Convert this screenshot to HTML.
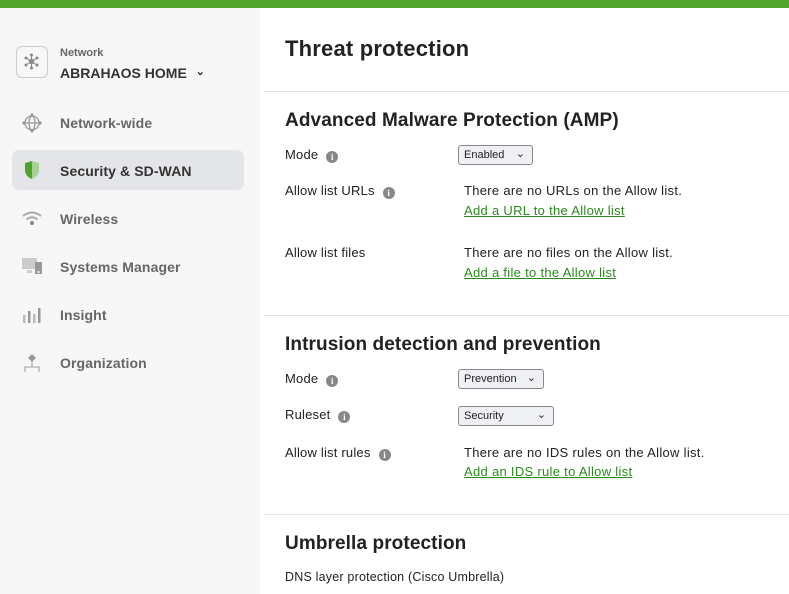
<!DOCTYPE html>
<html><head><style>
*{margin:0;padding:0;box-sizing:border-box}
body{width:789px;height:594px;overflow:hidden;font-family:"Liberation Sans",sans-serif;background:#fff;position:relative;color:#222}
.top{position:absolute;left:0;top:0;width:789px;height:8px;background:#52a52c}
.side{position:absolute;left:0;top:8px;width:260px;height:586px;background:#f7f7f7}
.abs{position:absolute}
.nav{position:absolute;left:60px;font-size:14px;font-weight:bold;color:#666;letter-spacing:0.1px}
.sel{position:absolute;left:12px;top:150px;width:232px;height:40px;background:#e3e5e8;border-radius:7px}
.hr{position:absolute;left:264px;width:525px;height:1px;background:#e2e2e2}
.h1{position:absolute;left:285px;top:36px;font-size:22px;font-weight:bold;color:#222;letter-spacing:0.2px}
.h2{position:absolute;left:285px;font-size:19px;font-weight:bold;color:#222;letter-spacing:0.1px}
.l{position:absolute;left:285px;font-size:13px;color:#222;letter-spacing:0.2px}
.v{position:absolute;left:464px;font-size:13px;color:#222;letter-spacing:0.3px}
a{position:absolute;left:464px;font-size:13px;color:#2a8a1c;text-decoration:underline;letter-spacing:0.3px}
.i{display:inline-block;width:12px;height:12px;border-radius:50%;background:#888;color:#fff;font-size:9px;text-align:center;line-height:12px;font-weight:bold;margin-left:8px;vertical-align:-1px;font-family:"Liberation Serif",serif}
.dd{position:absolute;left:458px;height:20px;border:1px solid #888;border-radius:3px;background:#eef0f3;font-size:11px;padding:3px 5px;color:#222}
.dd span{position:absolute;right:7px;top:1px;font-size:11px}
</style></head><body>
<div class="top"></div>
<div class="side"></div>
<div class="abs" style="left:16px;top:46px;width:32px;height:32px;border:1.5px solid #ccc;border-radius:6px;background:#f7f7f7">
<svg width="29" height="29" viewBox="0 0 29 29"><g stroke="#888" fill="#888"><circle cx="14.5" cy="14.5" r="2" fill="none" stroke-width="1.5"/><line x1="14.5" y1="8" x2="14.5" y2="21"/><line x1="9" y1="11" x2="20" y2="18"/><line x1="9" y1="18" x2="20" y2="11"/><circle cx="14.5" cy="8" r="1"/><circle cx="14.5" cy="21" r="1"/><circle cx="9" cy="11" r="1"/><circle cx="20" cy="18" r="1"/><circle cx="9" cy="18" r="1"/><circle cx="20" cy="11" r="1"/></g></svg></div>
<div class="abs" style="left:60px;top:47px;font-size:11px;font-weight:bold;color:#666">Network</div>
<div class="abs" style="left:60px;top:65px;font-size:14px;font-weight:bold;color:#333">ABRAHAOS HOME <span style="font-size:11px;margin-left:5px;position:relative;top:-3px">&#8964;</span></div>
<svg class="abs" style="left:21px;top:112px" width="22" height="22" viewBox="0 0 22 22"><g stroke="#999" fill="none" stroke-width="1.3"><circle cx="11" cy="11" r="7"/><ellipse cx="11" cy="11" rx="3" ry="7"/><line x1="4" y1="11" x2="18" y2="11"/></g><g fill="#999"><circle cx="11" cy="3" r="1.6"/><circle cx="11" cy="19" r="1.6"/><circle cx="3" cy="11" r="1.6"/><circle cx="19" cy="11" r="1.6"/></g></svg>
<div class="nav" style="top:115px">Network-wide</div>
<div class="sel"></div>
<svg class="abs" style="left:23px;top:160px" width="18" height="20" viewBox="0 0 18 20"><path d="M9 1 L2 3 V10 Q2 16 9 19 Z" fill="#4fa22a"/><path d="M9 1 L16 3 V10 Q16 16 9 19 Z" fill="#a8d197"/></svg>
<div class="nav" style="top:163px;color:#333">Security &amp; SD-WAN</div>
<svg class="abs" style="left:21px;top:209px" width="22" height="18" viewBox="0 0 22 18"><g fill="none" stroke="#aaa" stroke-width="2"><path d="M2 7 Q11 0 20 7"/><path d="M5.5 10.5 Q11 6 16.5 10.5"/></g><circle cx="11" cy="14" r="2" fill="#888"/></svg>
<div class="nav" style="top:211px">Wireless</div>
<svg class="abs" style="left:21px;top:257px" width="22" height="20" viewBox="0 0 22 20"><rect x="1" y="1" width="15" height="11" fill="#ccc"/><rect x="6" y="13" width="5" height="3" fill="#ccc"/><rect x="14" y="5" width="7" height="12" fill="#999"/><rect x="16.5" y="14" width="2" height="2" fill="#eee"/></svg>
<div class="nav" style="top:259px">Systems Manager</div>
<svg class="abs" style="left:22px;top:306px" width="20" height="18" viewBox="0 0 20 18"><rect x="1" y="9" width="2.5" height="8" fill="#bbb"/><rect x="6" y="5" width="2.5" height="12" fill="#999"/><rect x="11" y="8" width="2.5" height="9" fill="#bbb"/><rect x="16" y="2" width="2.5" height="15" fill="#999"/></svg>
<div class="nav" style="top:307px">Insight</div>
<svg class="abs" style="left:22px;top:353px" width="20" height="20" viewBox="0 0 20 20"><path d="M10 1 L14 5 L10 9 L6 5 Z" fill="#999"/><line x1="10" y1="9" x2="10" y2="14" stroke="#bbb" stroke-width="1.5"/><line x1="2" y1="14" x2="18" y2="14" stroke="#bbb" stroke-width="1.5"/><line x1="3" y1="14" x2="3" y2="19" stroke="#bbb" stroke-width="1.5"/><line x1="17" y1="14" x2="17" y2="19" stroke="#bbb" stroke-width="1.5"/></svg>
<div class="nav" style="top:355px">Organization</div>

<div class="h1">Threat protection</div>
<div class="hr" style="top:91px"></div>
<div class="h2" style="top:110px">Advanced Malware Protection (AMP)</div>
<div class="l" style="top:147px">Mode<span class="i">i</span></div>
<div class="dd" style="top:145px;width:75px">Enabled<span>&#8964;</span></div>
<div class="l" style="top:183px">Allow list URLs<span class="i">i</span></div>
<div class="v" style="top:183px">There are no URLs on the Allow list.</div>
<a style="top:203px">Add a URL to the Allow list</a>
<div class="l" style="top:245px">Allow list files</div>
<div class="v" style="top:245px">There are no files on the Allow list.</div>
<a style="top:265px">Add a file to the Allow list</a>
<div class="hr" style="top:315px"></div>
<div class="h2" style="top:334px">Intrusion detection and prevention</div>
<div class="l" style="top:371px">Mode<span class="i">i</span></div>
<div class="dd" style="top:369px;width:86px">Prevention<span>&#8964;</span></div>
<div class="l" style="top:407px">Ruleset<span class="i">i</span></div>
<div class="dd" style="top:406px;width:96px">Security<span>&#8964;</span></div>
<div class="l" style="top:445px">Allow list rules<span class="i">i</span></div>
<div class="v" style="top:445px">There are no IDS rules on the Allow list.</div>
<a style="top:464px">Add an IDS rule to Allow list</a>
<div class="hr" style="top:514px"></div>
<div class="h2" style="top:533px">Umbrella protection</div>
<div class="l" style="top:570px;font-size:12.5px">DNS layer protection (Cisco Umbrella)</div>
</body></html>
